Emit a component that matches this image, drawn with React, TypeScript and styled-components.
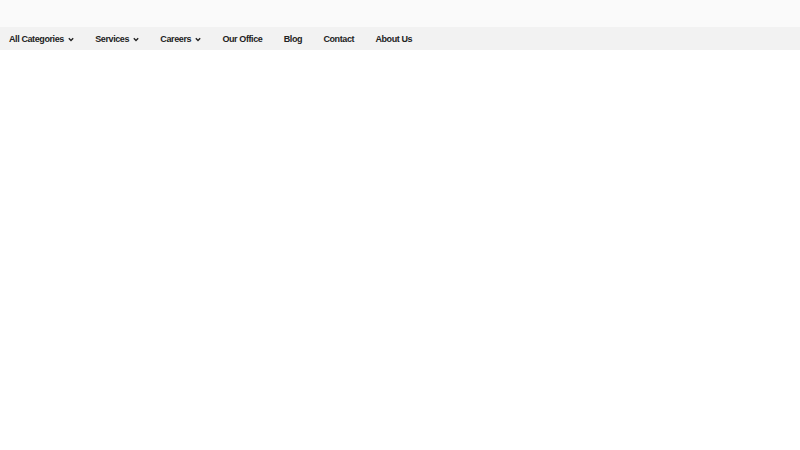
import React from "react";
import styled, { createGlobalStyle } from "styled-components";

const Global = createGlobalStyle`
  html, body { margin: 0; padding: 0; background: #ffffff; }
  body { font-family: "Liberation Sans", Arial, sans-serif; }
`;

const Page = styled.div`
  width: 800px;
  min-height: 450px;
  background: #ffffff;
`;

const TopBar = styled.div`
  height: 27px;
  background: #fafafa;
`;

const Nav = styled.nav`
  height: 23px;
  box-sizing: border-box;
  padding: 1px 0 0 9px;
  background: #f2f2f2;
  display: flex;
  align-items: center;
  gap: 21.3px;
`;

const Item = styled.a`
  display: flex;
  align-items: center;
  gap: 4px;
  font-size: 9px;
  font-weight: 700;
  letter-spacing: -0.4px;
  color: #222222;
  text-decoration: none;
  white-space: nowrap;
`;

const Chevron = () => (
  <svg width="6" height="5" viewBox="0 0 6 5" aria-hidden>
    <path d="M0.8 1.2 L3 3.4 L5.2 1.2" fill="none" stroke="#222" strokeWidth="1.4" />
  </svg>
);

const items: { label: string; dropdown?: boolean }[] = [
  { label: "All Categories", dropdown: true },
  { label: "Services", dropdown: true },
  { label: "Careers", dropdown: true },
  { label: "Our Office" },
  { label: "Blog" },
  { label: "Contact" },
  { label: "About Us" },
];

export default function App() {
  return (
    <Page>
      <Global />
      <TopBar />
      <Nav>
        {items.map((it) => (
          <Item key={it.label} href="#">
            {it.label}
            {it.dropdown && <Chevron />}
          </Item>
        ))}
      </Nav>
    </Page>
  );
}
